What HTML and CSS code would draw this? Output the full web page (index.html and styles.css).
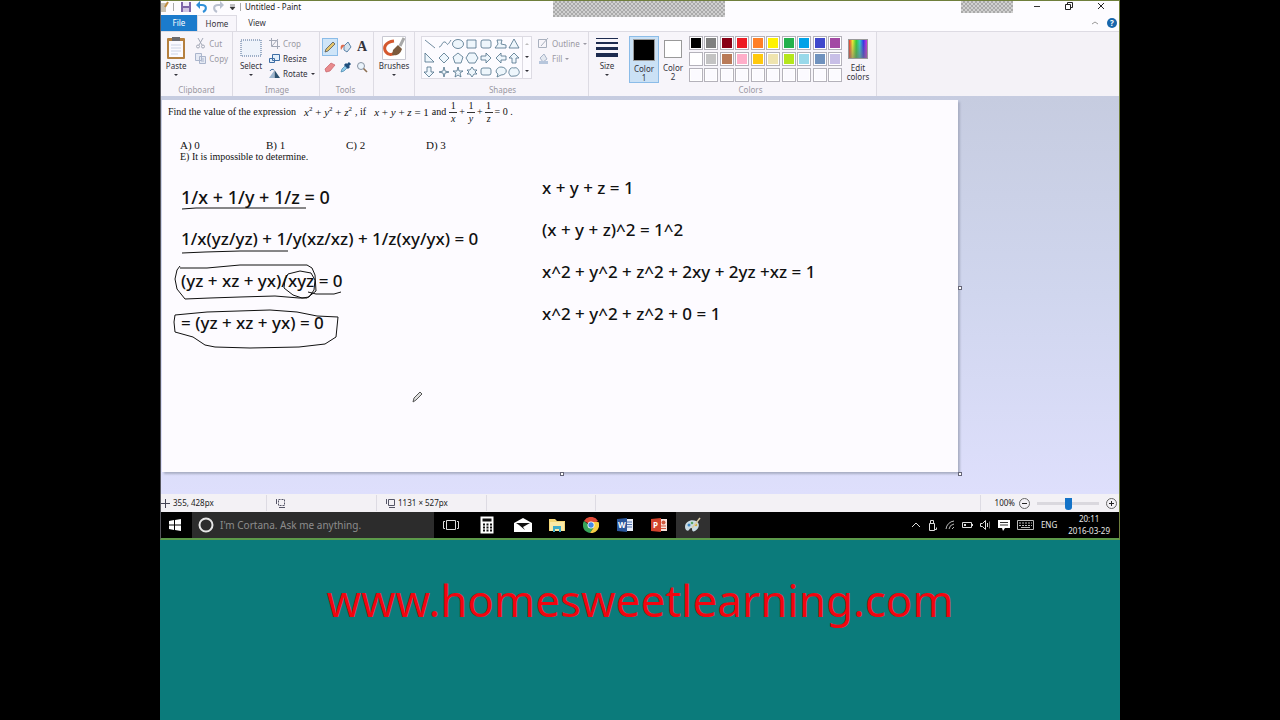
FILE: index.html
```html
<!DOCTYPE html>
<html lang="en">
<head>
  <meta charset="UTF-8">
  <title>Untitled - Paint</title>
  <meta name="viewport" content="width=device-width, initial-scale=1.0">
  <link rel="stylesheet" href="styles.css">
</head>
<body>
  <div class="screen">
    <div class="desktop">

      <header class="titlebar">
        <div class="quick">
          <svg width="8" height="12" viewBox="0 0 8 12"><path d="M0 2h5v9H0z" fill="#c9c2b4"/><path d="M4 6l3-5" stroke="#c08a3c" stroke-width="2"/></svg>
          <span class="bar"></span>
          <button class="save" aria-label="Save"><svg width="12" height="12" viewBox="0 0 12 12"><path d="M1 1h10v10H1z" fill="#7e65a8"/><path d="M3 1h6v4H3z" fill="#efeaf7"/><path d="M3 7h6v4H3z" fill="#cfc4e2"/></svg></button>
          <button aria-label="Undo"><svg width="12" height="12" viewBox="0 0 12 12"><path d="M2 4h4c5 0 5 5 1 7" fill="none" stroke="#2f8fd8" stroke-width="2"/><path d="M0 4l4-4v8z" fill="#2f8fd8"/></svg></button>
          <button aria-label="Redo"><svg width="12" height="12" viewBox="0 0 12 12"><path d="M10 4H6c-5 0-5 5-1 7" fill="none" stroke="#b9c0cf" stroke-width="2"/><path d="M12 4L8 0v8z" fill="#b9c0cf"/></svg></button>
          <button aria-label="Customize"><svg width="8" height="8" viewBox="0 0 8 8"><path d="M2 2h5M2 4h5L4.500 7z" fill="#333" stroke="#333" stroke-width=".6"/></svg></button>
          <span class="bar"></span>
          <h1>Untitled - Paint</h1>
        </div>
        <div class="grip"></div>
        <div class="grip small"></div>
        <div class="winbtns">
          <button aria-label="Minimize"><svg width="10" height="10" viewBox="0 0 10 10"><path d="M2 5.500h6" stroke="#333"/></svg></button>
          <button aria-label="Restore"><svg width="10" height="10" viewBox="0 0 10 10" fill="none" stroke="#222"><path d="M1.500 3.500h5v5h-5zM3.500 3V1.500h5v5H7"/></svg></button>
          <button aria-label="Close"><svg width="10" height="10" viewBox="0 0 10 10"><path d="M2 2l6 6M8 2L2 8" stroke="#222"/></svg></button>
        </div>
      </header>

      <nav class="tabs">
        <button class="tab file">File</button>
        <button class="tab active">Home</button>
        <button class="tab">View</button>
        <button class="collapse" aria-label="Collapse ribbon"><svg width="8" height="6" viewBox="0 0 8 6"><path d="M1 4l3-2 3 2" fill="none" stroke="#999"/></svg></button>
        <button class="help" aria-label="Help">?</button>
      </nav>

      <section class="ribbon">
        <div class="group clipboard">
          <div class="tools">
            <button class="big">
              <svg width="20" height="24" viewBox="0 0 20 24"><rect x="1" y="2" width="18" height="21" rx="1" fill="#b5803f"/><path d="M3 5h14v16H3z" fill="#fbfaff"/><path d="M6 1h8v4H6z" fill="#6b6b70"/><path d="M5 9h10M5 12h10M5 15h10M5 18h7" stroke="#ccd3e4"/></svg>
              <span>Paste</span><i class="arrow"></i>
            </button>
            <div class="stack">
              <button class="off"><svg width="11" height="11" viewBox="0 0 11 11" fill="none" stroke="#a3a8b6"><path d="M3 0l4 7M8 0L4 7"/><circle cx="3" cy="8.500" r="1.500"/><circle cx="8" cy="8.500" r="1.500"/></svg>Cut</button>
              <button class="off"><svg width="11" height="11" viewBox="0 0 11 11" fill="#e6eaf4" stroke="#aab5cc"><path d="M.5.5h6v7h-6zM4.500 3.500h6v7h-6z"/><path d="M6 6h3M6 8h3"/></svg>Copy</button>
            </div>
          </div>
          <span class="caption">Clipboard</span>
        </div>

        <div class="group image">
          <div class="tools">
            <button class="big">
              <svg width="22" height="24" viewBox="0 0 22 24"><rect x="1" y="4" width="20" height="16" fill="#eef3fb" stroke="#4a6b94" stroke-dasharray="1 1"/></svg>
              <span>Select</span><i class="arrow"></i>
            </button>
            <div class="stack">
              <button class="off"><svg width="11" height="11" viewBox="0 0 11 11" fill="none" stroke="#a3a8b6"><path d="M2.500 0v8.500H11M0 2.500h8.500V11M3 8l6-7"/></svg>Crop</button>
              <button><svg width="11" height="11" viewBox="0 0 11 11" fill="#e3effb" stroke="#3e6ea5"><path d="M3.500 1.500h7v6h-7zM.5 5.500h5v4h-5z"/></svg>Resize</button>
              <button><svg width="11" height="11" viewBox="0 0 11 11"><path d="M0 10h5V3z" fill="#9db6cf"/><path d="M5.500 10H11L5.500 2z" fill="#2c5270"/><path d="M1 3c1-2 3-2 4-1" fill="none" stroke="#3e6ea5"/></svg>Rotate <i class="arrow"></i></button>
            </div>
          </div>
          <span class="caption">Image</span>
        </div>

        <div class="group tool">
          <div class="toolgrid">
            <button class="on" aria-label="Pencil"><svg width="12" height="12" viewBox="0 0 12 12"><path d="M1 11l1-3 7-7 2 2-7 7z" fill="#e5c56b" stroke="#555" stroke-width=".8"/></svg></button>
            <button aria-label="Fill"><svg width="12" height="12" viewBox="0 0 12 12"><path d="M4 5l4-4 3 5-4 5-3-2z" fill="#d4e2ee" stroke="#5c83a8"/><path d="M5 4C1 3 0 5 1 9l2-3z" fill="#df6b4d"/></svg></button>
            <button class="letter" aria-label="Text">A</button>
            <button aria-label="Eraser"><svg width="12" height="12" viewBox="0 0 12 12"><path d="M1 8l6-6 4 2-5 6-4 1z" fill="#e98a8c" stroke="#c56068" stroke-width=".7"/></svg></button>
            <button aria-label="Color picker"><svg width="12" height="12" viewBox="0 0 12 12"><path d="M1 11l1-3 4-4 2 2-4 4z" fill="#8ecbea" stroke="#4584aa" stroke-width=".7"/><path d="M5 3l4 4M7 5l3-3" stroke="#1f4e7d" stroke-width="3"/></svg></button>
            <button aria-label="Magnifier"><svg width="12" height="12" viewBox="0 0 12 12"><circle cx="5" cy="5" r="3.500" fill="#eaf3fb" stroke="#8894a3"/><path d="M7.500 7.500L11 11" stroke="#8c6f52" stroke-width="1.600"/></svg></button>
          </div>
          <span class="caption">Tools</span>
        </div>

        <div class="group brushes">
          <button class="big">
            <svg width="24" height="24" viewBox="0 0 24 24"><path d="M.5.5h23v23H.5z" fill="#fff" stroke="#c9c9d2"/><path d="M12 5C3 6 1 12 4 16c3 4 8 3 11-2" fill="none" stroke="#d4582e" stroke-width="3"/><path d="M11 14l5-5 4 4c-2 6-6 7-10 6z" fill="#7c5a3c"/><path d="M18 10l4-8" stroke="#a8a8a8" stroke-width="3"/></svg>
            <span>Brushes</span><i class="arrow"></i>
          </button>
        </div>

        <div class="group shapes">
          <div class="tools">
            <div class="gallery">
              <svg width="100" height="42" viewBox="0 0 100 42" fill="#eef6fc" stroke="#4c7088" stroke-width=".8">
                <path d="M3 3l10 8" fill="none"/>
                <path d="M17 10c3 0 3-6 6-5s1 6 6-2" fill="none"/>
                <ellipse cx="36" cy="7" rx="5.500" ry="4.500"/>
                <path d="M45 3h9v8h-9z"/>
                <rect x="59" y="3" width="10" height="8" rx="2"/>
                <path d="M75 3h5l-1 4 5 1v3H73l3-4z"/>
                <path d="M87 11h10l-5-9z"/>
                <path d="M3 16v9h9z"/>
                <path d="M22 16l5 5-5 5-5-5z"/>
                <path d="M36 16l5 4-2 6h-6l-2-6z"/>
                <path d="M47 16h6l3 5-3 5h-6l-3-5z"/>
                <path d="M59 19h5v-3l5 5-5 5v-3h-5z"/>
                <path d="M84 19h-5v-3l-5 5 5 5v-3h5z"/>
                <path d="M90 26v-5h-3l5-5 5 5h-3v5z"/>
                <path d="M5 30v5H2l5 5 5-5H9v-5z"/>
                <path d="M22 30l1 4 4 1-4 1-1 4-1-4-4-1 4-1z"/>
                <path d="M36 30l1 4h4l-3 2 1 4-3-2-3 2 1-4-3-2h4z"/>
                <path d="M50 30l2 3h3l-2 2 2 2h-3l-2 3-2-3h-3l2-2-2-2h3z"/>
                <rect x="59" y="31" width="10" height="7" rx="2"/>
                <path d="M75 40l1-3c-4-2-1-7 3-7 7 0 7 8 0 8z"/>
                <path d="M88 32c2-2 3-1 4-1 3-1 4 1 5 3s-1 5-4 5-5 1-5-1c-2-2-1-4 0-6z"/>
              </svg>
              <div class="scroller"><i class="arrow up"></i><i class="arrow"></i><i class="arrow line"></i></div>
            </div>
            <div class="stack">
              <button class="off"><svg width="11" height="11" viewBox="0 0 11 11" fill="none" stroke="#a9b0be"><path d="M.5 1.500h8v8h-8zM3 8l7-8"/></svg>Outline <i class="arrow"></i></button>
              <button class="off"><svg width="11" height="11" viewBox="0 0 11 11"><path d="M2 5l4-4 3 5-4 3z" fill="#e3e8f0" stroke="#a9b5c9"/><path d="M1 8h9v3H1z" fill="#b7c6dc"/></svg>Fill <i class="arrow"></i></button>
            </div>
          </div>
          <span class="caption">Shapes</span>
        </div>

        <div class="group size">
          <button class="big">
            <svg width="24" height="24" viewBox="0 0 24 24" stroke="#1d2b4f"><path d="M1 2.500h22"/><path d="M1 7h22" stroke-width="2"/><path d="M1 12.500h22" stroke-width="3"/><path d="M1 19h22" stroke-width="4"/></svg>
            <span>Size</span><i class="arrow"></i>
          </button>
        </div>

        <div class="group colors">
          <div class="tools">
            <button class="slot on"><b class="well black"></b><span>Color<br>1</span></button>
            <button class="slot"><b class="well small"></b><span>Color<br>2</span></button>
            <div class="palette">
              <button class="c1" aria-label="Black"></button><button class="c2" aria-label="Gray"></button><button class="c3" aria-label="Dark red"></button><button class="c4" aria-label="Red"></button><button class="c5" aria-label="Orange"></button><button class="c6" aria-label="Yellow"></button><button class="c7" aria-label="Green"></button><button class="c8" aria-label="Turquoise"></button><button class="c9" aria-label="Indigo"></button><button class="c10" aria-label="Purple"></button>
              <button class="c11" aria-label="White"></button><button class="c12" aria-label="Light gray"></button><button class="c13" aria-label="Brown"></button><button class="c14" aria-label="Rose"></button><button class="c15" aria-label="Gold"></button><button class="c16" aria-label="Light yellow"></button><button class="c17" aria-label="Lime"></button><button class="c18" aria-label="Light turquoise"></button><button class="c19" aria-label="Blue gray"></button><button class="c20" aria-label="Lavender"></button>
              <button aria-label="Custom 1"></button><button aria-label="Custom 2"></button><button aria-label="Custom 3"></button><button aria-label="Custom 4"></button><button aria-label="Custom 5"></button><button aria-label="Custom 6"></button><button aria-label="Custom 7"></button><button aria-label="Custom 8"></button><button aria-label="Custom 9"></button><button aria-label="Custom 10"></button>
            </div>
            <button class="slot"><b class="well rainbow"></b><span>Edit<br>colors</span></button>
          </div>
          <span class="caption">Colors</span>
        </div>
      </section>

      <main class="work">
        <div class="canvas">
          <div class="problem">
            <span>Find the value of the expression</span>
            <span class="math"><i>x</i><sup>2</sup> + <i>y</i><sup>2</sup> + <i>z</i><sup>2</sup></span>
            <span>, if</span>
            <span class="math"><i>x</i> + <i>y</i> + <i>z</i> = 1</span>
            <span>and</span>
            <span class="fracs"><span class="frac"><span>1</span><i>x</i></span>+<span class="frac"><span>1</span><i>y</i></span>+<span class="frac"><span>1</span><i>z</i></span>= 0 .</span>
          </div>
          <div class="choices">
            <span>A) 0</span><span>B) 1</span><span>C) 2</span><span>D) 3</span>
            <span class="wide">E) It is impossible to determine.</span>
          </div>
          <div class="work-cols">
            <div class="left-col">
              <p class="lead">1/x + 1/y + 1/z = 0</p>
              <p>1/x(yz/yz) + 1/y(xz/xz) + 1/z(xy/yx) = 0</p>
              <p>(yz + xz + yx)/xyz = 0</p>
              <p>= (yz + xz + yx) = 0</p>
            </div>
            <div class="right-col">
              <p>x + y + z = 1</p>
              <p>(x + y + z)^2 = 1^2</p>
              <p>x^2 + y^2 + z^2 + 2xy + 2yz +xz = 1</p>
              <p>x^2 + y^2 + z^2 + 0 = 1</p>
            </div>
          </div>
          <!-- pencil marks over the text -->
          <svg class="ink" width="400" height="372" viewBox="162 100 400 372" fill="none" stroke="#111">
            <path d="M182 209l14-1h110"/>
            <path d="M182 253l23-1 35-1h48"/>
            <path d="M180 268h27l33-3h67l5 3 3 7 1 16-9 7h-8l-24-2-35 1-30 1-25 1-8-10-2-10 2-9 3-4"/>
            <path d="M284 288l1-9 3-5 12-3 11 2 4 7-1 10-5 7-7 1-9-3-9-7"/>
            <path d="M308 292l8 2h18l7-2"/>
            <path d="M175 315l32-3 63-2 27 2 20 4 21 1-2 20-11 7-26 3-49 1-35-1-10-2-12-8-18-5-1-10z"/>
            <path d="M413 402l1-4 6-6 2 2-6 6z" fill="#ddd" stroke="#555"/>
          </svg>
          <i class="handle right"></i><i class="handle bottom"></i><i class="handle corner"></i>
        </div>
      </main>

      <footer class="status">
        <div class="cell pos"><svg width="9" height="9" viewBox="0 0 9 9"><path d="M4.500 0v9M0 4.500h9" stroke="#445"/></svg>355, 428px</div>
        <div class="cell sel"><svg width="10" height="9" viewBox="0 0 10 9" fill="none" stroke="#556"><path d="M3.500.5h6v6h-6z" stroke-dasharray="2 1"/><path d="M1.500 0v5M4 8.500h6"/></svg></div>
        <div class="cell dim"><svg width="10" height="9" viewBox="0 0 10 9" fill="none" stroke="#556"><path d="M3.500.5h6v6h-6zM1.500 0v5M4 8.500h6"/></svg>1131 × 527px</div>
        <div class="cell disk"></div>
        <div class="zoom">
          <label for="zoom">100%</label>
          <button aria-label="Zoom out"><svg width="11" height="11" viewBox="0 0 11 11" fill="none" stroke="#666"><circle cx="5.500" cy="5.500" r="5"/><path d="M3 5.500h5" stroke="#222"/></svg></button>
          <input type="range" id="zoom" min="0" max="100" value="50">
          <button aria-label="Zoom in"><svg width="11" height="11" viewBox="0 0 11 11" fill="none" stroke="#666"><circle cx="5.500" cy="5.500" r="5"/><path d="M3 5.500h5M5.500 3v5" stroke="#222"/></svg></button>
        </div>
      </footer>

      <div class="taskbar">
        <button class="start" aria-label="Start"><svg width="12" height="12" viewBox="0 0 12 12" fill="#fff"><path d="M0 2l5-1v4.500H0zM6 1l6-1v5.500H6zM0 6.500h5V11l-5-1zM6 6.500h6V12l-6-1z"/></svg></button>
        <label class="search">
          <svg width="16" height="16" viewBox="0 0 16 16"><circle cx="8" cy="8" r="6.500" fill="none" stroke="#e6e6e6" stroke-width="2"/></svg>
          <input type="text" aria-label="Search" placeholder="I'm Cortana. Ask me anything.">
        </label>
        <button class="app" aria-label="Task view"><svg width="16" height="12" viewBox="0 0 16 12" fill="none" stroke="#ddd"><path d="M3.500 1.500h9v9h-9zM2 2.500H.5v7H2M14 2.500h1.500v7H14"/></svg></button>
        <button class="app calc" aria-label="Calculator"><svg width="14" height="18" viewBox="0 0 14 18"><path d="M.5.5h13v17H.5z" fill="#fff"/><path d="M2.500 2.500h9v3h-9z" fill="#111"/><path d="M3 8.500h9M3 11.500h9M3 14.500h9" stroke="#111" stroke-width="2" stroke-dasharray="2 1.500"/></svg></button>
        <button class="app" aria-label="Mail"><svg width="18" height="14" viewBox="0 0 18 14"><path d="M0 5l9-5 9 5v9H0z" fill="#fff"/><path d="M2 5h14l-7 4 2 3-6-5z" fill="#111"/></svg></button>
        <button class="app" aria-label="File Explorer"><svg width="16" height="14" viewBox="0 0 16 14"><path d="M0 1h6l2 2h8v10H0z" fill="#f3d675"/><path d="M1 4h14v9H1z" fill="#fbe9a5"/><path d="M4 14V8h8v6h-2v-3H6v3z" fill="#3eabc9"/></svg></button>
        <button class="app" aria-label="Chrome"><svg width="16" height="16" viewBox="0 0 16 16"><path d="M8 8L1 4a8 8 0 0 1 14 0z" fill="#df4937"/><path d="M8 8h-2L1 4a8 8 0 0 0 6 12l4-6z" fill="#37a45a"/><path d="M8 5h7.500A8 8 0 0 1 7 16l4-6z" fill="#f7cf45"/><circle cx="8" cy="8" r="3.500" fill="#fff"/><circle cx="8" cy="8" r="2.700" fill="#4387e8"/></svg></button>
        <button class="app" aria-label="Word"><svg width="16" height="14" viewBox="0 0 16 14"><path d="M8 1h8v12H8z" fill="#e8eef8"/><path d="M10 4h5M10 6.500h5M10 9h5" stroke="#4a6fae"/><path d="M0 1l10-1v14L0 13z" fill="#2a569b"/><text x="1" y="10" class="badge">W</text></svg></button>
        <button class="app" aria-label="PowerPoint"><svg width="16" height="14" viewBox="0 0 16 14"><path d="M8 1h8v12H8z" fill="#f9e2dc"/><path d="M10 8h5M10 10.500h5" stroke="#cf5a3f"/><circle cx="12.500" cy="4.500" r="2" fill="#cf5a3f"/><path d="M0 1l10-1v14L0 13z" fill="#d2432c"/><text x="2" y="10" class="badge">P</text></svg></button>
        <button class="app open" aria-label="Paint"><svg width="18" height="16" viewBox="0 0 18 16"><path d="M1 10C1 4 8 2 12 4s4 7-1 10c-2 1-3 0-3-2s-2-1-3 1-4 0-4-3z" fill="#c9dbe4"/><circle cx="5" cy="8" r="1.500" fill="#3c86c4"/><circle cx="8" cy="6" r="1.300" fill="#5aa564"/><circle cx="12" cy="8" r="1.300" fill="#d8b33d"/><path d="M8 11l8-10" stroke="#d9cba6" stroke-width="1.500"/></svg></button>
        <div class="tray">
          <svg width="10" height="12" viewBox="0 0 10 12"><path d="M1 8l4-4 4 4" fill="none" stroke="#ddd"/></svg>
          <svg width="10" height="12" viewBox="0 0 10 12" fill="none" stroke="#ddd"><path d="M1.500 4.500h5v7h-5zM2.500 1.500h3v3h-3zM7 10.500h1.500v-2"/></svg>
          <svg width="10" height="12" viewBox="0 0 10 12" fill="none" stroke="#bbb"><path d="M1 10a9 9 0 0 1 8-8M4 10a6 6 0 0 1 5-5M7 10l2-2"/></svg>
          <svg width="11" height="12" viewBox="0 0 11 12"><path d="M.5 3.500h9v5h-9z" fill="none" stroke="#ddd"/><path d="M2 5h2v2H2zM10 5h1v2h-1z" fill="#ddd"/></svg>
          <svg width="11" height="12" viewBox="0 0 11 12" fill="none" stroke="#ddd"><path d="M.5 4.500h2l3-3v9l-3-3h-2zM7.500 4v4"/><path d="M9.500 2.500v7" stroke="#777"/></svg>
          <svg width="12" height="12" viewBox="0 0 12 12"><path d="M0 1h12v8H7l-2 3-1-3H0z" fill="#fff"/><path d="M2 3.500h8M2 6h8" stroke="#333"/></svg>
          <svg width="17" height="12" viewBox="0 0 17 12"><path d="M.5 1.500h16v9H.5z" fill="none" stroke="#bbb"/><path d="M2 4h13M2 6.500h13" stroke="#bbb" stroke-dasharray="2 1"/><path d="M4 8.500h9" stroke="#bbb"/></svg>
          <span>ENG</span>
          <time>20:11<br>2016-03-29</time>
        </div>
      </div>
    </div>

    <div class="site">
      <a href="#">www.homesweetlearning.com</a>
    </div>
  </div>
</body>
</html>
```

FILE: styles.css
```css
:root {
  --ui-font: "Noto Sans", "Open Sans", sans-serif;
  --line: #dddbe3;
  --text: #33323a;
  --muted: #9a98a2;
  --edge: #6f7f3c;
}

* {
  box-sizing: border-box;
}

body {
  margin: 0;
  background: #000;
  color: var(--text);
  font-family: var(--ui-font);
  font-size: 8px;
  line-height: 10px;
}

button {
  display: flex;
  align-items: center;
  justify-content: center;
  margin: 0;
  padding: 0;
  border: none;
  background: none;
  color: inherit;
  font: inherit;
  cursor: pointer;
}

svg {
  display: block;
  flex: none;
}

.screen {
  display: flex;
  flex-direction: column;
  width: 75%;
  min-height: 100vh;
  margin: 0 auto;
  background: #0b7b7b;
}

.desktop {
  border: 1px solid var(--edge);
  border-left-color: #55555c;
  border-bottom: 2px solid #5c9a4a;
  background: #fdfcff;
}

/* title bar */
.titlebar {
  display: flex;
  align-items: flex-start;
  height: 14px;
}

.quick {
  display: flex;
  align-items: center;
  gap: 4px;
  width: 392px;
  height: 12px;
}

.quick .save {
  margin-left: 2px;
}

.quick h1 {
  margin: 0;
  font-size: 8px;
  font-weight: 400;
  color: #222;
}

.bar {
  width: 1px;
  height: 8px;
  background: #aaa;
}

.grip {
  width: 172px;
  height: 16px;
  background: repeating-conic-gradient(#aaa 0 25%, #d0d0d0 0 50%) 0 0 / 4px 4px;
}

.grip.small {
  width: 52px;
  height: 12px;
  margin-left: auto;
}

.winbtns {
  display: flex;
  margin-left: 8px;
  padding-right: 2px;
}

.winbtns button {
  width: 32px;
  height: 10px;
}

/* tabs */
.tabs {
  display: flex;
  align-items: center;
  height: 16px;
  padding-right: 2px;
}

.tab {
  width: 40px;
  height: 16px;
}

.tab.file {
  width: 36px;
  background: #1b7bcc;
  color: #fff;
}

.tab.active {
  border: 1px solid var(--line);
  border-bottom: none;
  background: #f8f6fb;
}

.collapse {
  margin-left: auto;
}

.help {
  width: 10px;
  height: 10px;
  margin-left: 8px;
  border-radius: 50%;
  background: #1767ac;
  color: #fff;
  font-weight: 700;
}

/* ribbon */
.ribbon {
  display: flex;
  height: 65px;
  border-top: 1px solid var(--line);
  background: #f4f2f7;
}

.group {
  display: flex;
  flex-direction: column;
  justify-content: space-between;
  flex: none;
  padding: 4px 4px 1px;
  border-right: 1px solid var(--line);
  background: #f7f5fa;
}

.group.clipboard { width: 72px; }
.group.image { width: 87px; padding-left: 6px; }
.group.tool { width: 54px; padding-left: 2px; }
.group.brushes { width: 41px; align-items: center; }
.group.shapes { width: 174px; padding-left: 6px; }
.group.size { width: 36px; align-items: center; border-right: none; }
.group.colors { width: 252px; }

.tools {
  display: flex;
  align-items: flex-start;
  gap: 8px;
}

.image .tools,
.shapes .tools {
  gap: 6px;
}

.caption {
  color: var(--muted);
  text-align: center;
}

.big {
  flex-direction: column;
  width: 24px;
  white-space: nowrap;
}

.big span {
  margin-top: 1px;
  margin-bottom: 3px;
}

.arrow {
  border: 2px solid transparent;
  border-top-color: currentColor;
  border-bottom: none;
}

.stack button {
  justify-content: flex-start;
  gap: 3px;
  height: 15px;
  white-space: nowrap;
}

.stack button.off {
  color: var(--muted);
}

.toolgrid {
  display: grid;
  grid-template-columns: repeat(3, 16px);
  grid-auto-rows: 18px;
  row-gap: 2px;
  padding-top: 2px;
}

.toolgrid .on {
  border: 1px solid #8bbce8;
  background: #cfe5f8;
}

.letter {
  font-family: "Liberation Serif", serif;
  font-size: 14px;
  font-weight: 700;
}

.gallery {
  display: flex;
  height: 43px;
  border: 1px solid var(--line);
  background: #fcfbff;
}

.scroller {
  display: flex;
  flex-direction: column;
  align-items: center;
  justify-content: space-around;
  width: 9px;
  border-left: 1px solid var(--line);
}

.arrow.up {
  border-top: none;
  border-bottom: 2px solid #bbb;
}

/* colors */
.colors .tools {
  gap: 0;
}

.slot {
  flex-direction: column;
  justify-content: flex-start;
  width: 28px;
  height: 47px;
  padding-top: 2px;
}

.slot.on {
  width: 30px;
  border: 1px solid #8bbce8;
  background: #cbe1f5;
}

.well {
  width: 22px;
  height: 22px;
  margin-bottom: 3px;
  border: 1px solid #999;
  background: #fff;
}

.well.small {
  width: 18px;
  height: 18px;
  margin: 2px 0 5px;
}

.slot span {
  line-height: 9px;
}

.well.black { background: #000; }

.well.rainbow {
  width: 20px;
  height: 20px;
  margin: 1px 0 4px;
  background: linear-gradient(rgba(255, 255, 255, 0), #7779), linear-gradient(90deg, #e33, #ee3, #3c3, #3cc, #33e, #d3d);
}

.palette {
  display: grid;
  grid-template-columns: repeat(10, 14px);
  justify-content: space-between;
  row-gap: 2px;
  width: 153px;
  margin: 0 2px;
}

.palette button {
  height: 14px;
  border: 1px solid #b4b2ba;
  background: #fbfaff;
  box-shadow: inset 0 0 0 1px #fff;
}

.palette .c1 { background: #000; }
.palette .c2 { background: #7f7f7f; }
.palette .c3 { background: #880015; }
.palette .c4 { background: #ed1c24; }
.palette .c5 { background: #ff7f27; }
.palette .c6 { background: #fff200; }
.palette .c7 { background: #22b14c; }
.palette .c8 { background: #00a2e8; }
.palette .c9 { background: #3f48cc; }
.palette .c10 { background: #a349a4; }
.palette .c11 { background: #fff; }
.palette .c12 { background: #c3c3c3; }
.palette .c13 { background: #b97a57; }
.palette .c14 { background: #ffaec9; }
.palette .c15 { background: #ffc90e; }
.palette .c16 { background: #efe4b0; }
.palette .c17 { background: #b5e61d; }
.palette .c18 { background: #99d9ea; }
.palette .c19 { background: #7092be; }
.palette .c20 { background: #c8bfe7; }

/* drawing area */
.work {
  padding: 4px 161px 22px 1px;
  background: linear-gradient(#c6cce0, #d0d6ee 50%, #dedffc);
}

.canvas {
  position: relative;
  padding-bottom: 128px;
  background: #fdfbff;
  box-shadow: 2px 2px 2px #a9aec4;
  color: #111;
}

.problem {
  display: flex;
  align-items: center;
  gap: 3px;
  height: 24px;
  padding-left: 6px;
  font: 10px/12px "Liberation Serif", serif;
  white-space: nowrap;
}

.problem sup {
  font-size: 7px;
  line-height: 0;
}

.math {
  margin-left: 5px;
  font-size: 11px;
}

.fracs {
  display: flex;
  align-items: center;
  gap: 2px;
}

.frac {
  display: flex;
  flex-direction: column;
  align-items: center;
  width: 8px;
}

.frac span {
  width: 8px;
  border-bottom: 1px solid #333;
  text-align: center;
}

.choices {
  display: grid;
  grid-template-columns: 86px 80px 80px 80px;
  padding: 15px 0 0 18px;
  font: 11px/12px "Liberation Serif", serif;
}

.choices .wide {
  grid-column: 1 / -1;
  font-size: 10px;
}

.work-cols {
  display: grid;
  grid-template-columns: 361px 1fr;
  padding: 4px 0 0 19px;
  font-size: 17px;
  font-weight: 500;
  line-height: 42px;
  white-space: nowrap;
}

.work-cols p {
  margin: 0;
}

.work-cols .lead {
  font-size: 18px;
}

.left-col {
  padding-top: 9px;
}

.ink {
  position: absolute;
  top: 0;
  left: 0;
}

.handle {
  position: absolute;
  width: 4px;
  height: 4px;
  border: 1px solid #667;
  background: #fff;
}

.handle.right { right: -4px; top: 50%; }
.handle.bottom { bottom: -4px; left: 50%; }
.handle.corner { right: -4px; bottom: -4px; }

/* status bar */
.status {
  display: flex;
  align-items: center;
  height: 18px;
  background: #f3f1f5;
  color: #222;
}

.cell {
  display: flex;
  align-items: center;
  gap: 3px;
  height: 16px;
  padding-left: 8px;
  border-right: 1px solid var(--line);
}

.cell.pos { width: 106px; padding-left: 0; }
.cell.sel { width: 110px; }
.cell.dim { width: 110px; }
.cell.disk { width: 109px; }

.zoom {
  display: flex;
  align-items: center;
  gap: 4px;
  height: 16px;
  margin-left: auto;
  padding: 0 2px 0 14px;
  border-left: 1px solid var(--line);
}

.zoom input {
  appearance: none;
  width: 68px;
  height: 12px;
  margin: 0;
  padding: 0 3px;
  background: none;
}

.zoom input::-webkit-slider-runnable-track {
  height: 3px;
  background: #dad8de;
}

.zoom input::-webkit-slider-thumb {
  appearance: none;
  width: 7px;
  height: 12px;
  margin-top: -4px;
  border-radius: 0 0 3px 3px;
  background: #1473c8;
}

/* taskbar */
.taskbar {
  display: flex;
  height: 26px;
  background: #000;
  color: #e8e8e8;
}

.start {
  width: 31px;
  padding-right: 3px;
}

.search {
  display: flex;
  align-items: center;
  gap: 6px;
  width: 242px;
  padding-left: 6px;
  background: #2c2c2c;
}

.search input {
  flex: 1;
  min-width: 0;
  padding: 0;
  border: none;
  outline: none;
  background: none;
  font: 10px/14px var(--ui-font);
}

.search input::placeholder {
  color: #8d8d8d;
}

.app {
  width: 34px;
}

.app.calc {
  width: 38px;
}

.app.open {
  background: #303030;
}

.badge {
  fill: #fff;
  font: 700 8px var(--ui-font);
}

.tray {
  display: flex;
  align-items: center;
  gap: 7px;
  margin-left: auto;
  padding-right: 9px;
}

.tray time {
  margin-left: 4px;
  line-height: 12px;
  text-align: center;
}

/* site banner */
.site {
  flex: 1;
  padding-top: 29px;
  text-align: center;
}

.site a {
  color: #f2050f;
  font-size: 44px;
  line-height: 62px;
  text-decoration: none;
}
```
